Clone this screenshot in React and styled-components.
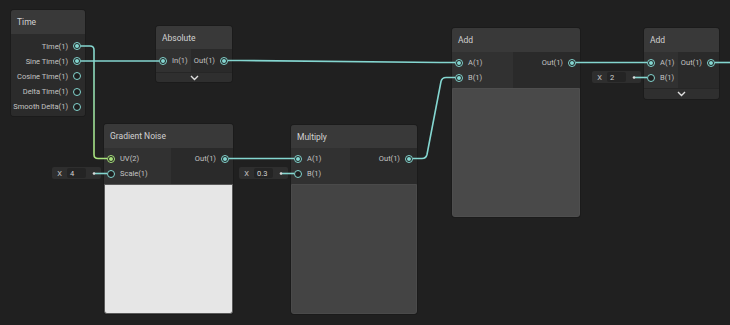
import React from 'react';
import styled, { createGlobalStyle } from 'styled-components';

const GlobalStyle = createGlobalStyle`
  html, body { margin: 0; padding: 0; background: #202020; }
  body { font-family: Roboto, "Noto Sans", sans-serif; }
`;

const CYAN = '#84d6d0';
const GREEN = '#a8e27c';

const Canvas = styled.div`
  position: relative;
  width: 730px;
  height: 325px;
  overflow: hidden;
  background: #202020;
`;

const WireLayer = styled.svg`
  position: absolute;
  left: 0;
  top: 0;
  width: 730px;
  height: 325px;
  pointer-events: none;
`;

const Node = styled.div`
  position: absolute;
  left: ${p => p.$x}px;
  top: ${p => p.$y}px;
  width: ${p => p.$w}px;
  border-radius: 3px;
  background: #2c2c2c;
  box-shadow: 0 0 0 1px #1b1b1b;
  display: flex;
  flex-direction: column;
`;

const Header = styled.div`
  height: ${p => p.$h}px;
  display: flex;
  align-items: center;
  padding-left: 6px;
  background: #393939;
  border-radius: 3px 3px 0 0;
  color: #d2d2d2;
  font-size: 8.5px;
`;

const Ports = styled.div`
  display: flex;
  height: ${p => p.$h}px;
`;

const InCol = styled.div`
  width: ${p => p.$w}px;
  background: #313131;
  display: flex;
  flex-direction: column;
  justify-content: center;
`;

const OutCol = styled.div`
  flex: 1;
  background: #2a2a2a;
  display: flex;
  flex-direction: column;
  justify-content: ${p => (p.$top ? 'flex-start' : 'center')};
  padding-top: ${p => (p.$top ? 3 : 0)}px;
`;

const Row = styled.div`
  position: relative;
  height: ${p => p.$h || 15}px;
  display: flex;
  align-items: center;
  justify-content: ${p => (p.$out ? 'flex-end' : 'flex-start')};
  gap: 5px;
  padding: ${p => (p.$out ? '0 4px 0 0' : '0 0 0 3px')};
  color: #c4c4c4;
  font-size: 7.5px;
  white-space: nowrap;
`;

const Port = styled.span`
  position: relative;
  width: 6px;
  height: 6px;
  border-radius: 50%;
  border: 1px solid ${p => p.$c || CYAN};
  background: #1e1e1e;
  flex: none;
  &::after {
    content: '';
    display: ${p => (p.$on ? 'block' : 'none')};
    position: absolute;
    left: 1px;
    top: 1px;
    width: 4px;
    height: 4px;
    border-radius: 50%;
    background: ${p => p.$c || CYAN};
  }
`;

const TimeBody = styled.div`
  padding: 4.5px 0 2px;
  background: #2b2b2b;
  border-radius: 0 0 3px 3px;
`;

const Chevron = styled.div`
  height: ${p => p.$h}px;
  display: flex;
  align-items: center;
  justify-content: center;
  background: #2f2f2f;
  border-top: 1px solid #262626;
  border-radius: 0 0 3px 3px;
`;

const Preview = styled.div`
  height: ${p => p.$h}px;
  background: ${p => p.$bg};
  border: 1px solid ${p => p.$edge};
  border-radius: 0 0 3px 3px;
`;

const Field = styled.div`
  position: absolute;
  right: calc(100% + 3px);
  top: 1px;
  width: 49px;
  height: 12px;
  display: flex;
  align-items: center;
  background: #2e2e2e;
  border-radius: 2px;
  color: #c4c4c4;
  font-size: 7.5px;
`;

const FieldLabel = styled.span`
  width: 15px;
  text-align: center;
`;

const FieldInput = styled.span`
  width: 16px;
  height: 10px;
  display: flex;
  align-items: center;
  padding-left: 3px;
  background: #242424;
  border-radius: 2px;
  color: #d4d4d4;
`;

const ChevronIcon = () => (
  <svg width="9" height="6" viewBox="0 0 9 6">
    <polyline points="1,1 4.5,4.5 8,1" fill="none" stroke="#e0e0e0" strokeWidth="1.4" />
  </svg>
);

const InField = ({ value }) => (
  <Field>
    <FieldLabel>X</FieldLabel>
    <FieldInput>{value}</FieldInput>
  </Field>
);

const Wires = () => (
  <WireLayer>
    <defs>
      <linearGradient id="tg" gradientUnits="userSpaceOnUse" x1="0" y1="46" x2="0" y2="158">
        <stop offset="0" stopColor={CYAN} />
        <stop offset="1" stopColor={GREEN} />
      </linearGradient>
    </defs>
    <g fill="none" strokeWidth="1.6" stroke={CYAN}>
      <path d="M81 46 H90 Q94 46 94 50 V154.5 Q94 158.5 98 158.5 H107" stroke="url(#tg)" />
      <path d="M81 61 H159" />
      <path d="M228 60.5 H240 L440 62.5 H455" />
      <path d="M229 158.5 H294" />
      <path d="M413 158.5 H422 Q426 158.5 427 154.5 L441 81.5 Q442 77.5 446 77.5 H455" />
      <path d="M576 62.5 H647" />
      <path d="M715 62.5 H730" />
      <path d="M94 173.5 H107" />
      <path d="M281 173.5 H294" />
      <path d="M634 77.5 H647" />
    </g>
    <g fill="#d8d8d8">
      <circle cx="94" cy="173.5" r="1.3" />
      <circle cx="281" cy="173.5" r="1.3" />
      <circle cx="634" cy="77.5" r="1.3" />
    </g>
  </WireLayer>
);

const TimeNode = () => (
  <Node $x={11} $y={10} $w={74}>
    <Header $h={24}>Time</Header>
    <TimeBody>
      {['Time(1)', 'Sine Time(1)', 'Cosine Time(1)', 'Delta Time(1)', 'Smooth Delta(1)'].map((l, i) => (
        <Row $out $h={15.2} key={l}>
          {l}
          <Port $on={i < 2} />
        </Row>
      ))}
    </TimeBody>
  </Node>
);

const MathNode = ({ x, y, w, title, head, inW, inputs, chevron, preview }) => (
  <Node $x={x} $y={y} $w={w}>
    <Header $h={head}>{title}</Header>
    <Ports $h={inputs.length > 1 ? 36 : 23}>
      <InCol $w={inW}>
        {inputs.map(inp => (
          <Row key={inp.label}>
            {inp.field && <InField value={inp.field} />}
            <Port $on={inp.on} $c={inp.color} />
            {inp.label}
          </Row>
        ))}
      </InCol>
      <OutCol $top={inputs.length > 1}>
        <Row $out>
          Out(1)
          <Port $on />
        </Row>
      </OutCol>
    </Ports>
    {chevron && (
      <Chevron $h={chevron}>
        <ChevronIcon />
      </Chevron>
    )}
    {preview && <Preview $h={preview.h} $bg={preview.bg} $edge={preview.edge} />}
  </Node>
);

export default function App() {
  return (
    <Canvas>
      <GlobalStyle />
      <TimeNode />
      <MathNode x={156} y={26} w={76} title="Absolute" head={23} inW={35}
        inputs={[{ label: 'In(1)', on: true }]} chevron={9} />
      <MathNode x={104} y={124} w={129} title="Gradient Noise" head={24} inW={67}
        inputs={[{ label: 'UV(2)', on: true, color: GREEN }, { label: 'Scale(1)', field: '4' }]}
        preview={{ h: 128, bg: '#e6e6e6', edge: '#5a5a5a' }} />
      <MathNode x={291} y={125} w={126} title="Multiply" head={23} inW={59}
        inputs={[{ label: 'A(1)', on: true }, { label: 'B(1)', field: '0.3' }]}
        preview={{ h: 128, bg: '#444444', edge: '#4a4a4a' }} />
      <MathNode x={452} y={28} w={128} title="Add" head={24} inW={61}
        inputs={[{ label: 'A(1)', on: true }, { label: 'B(1)', on: true }]}
        preview={{ h: 127, bg: '#494949', edge: '#4e4e4e' }} />
      <MathNode x={644} y={28} w={75} title="Add" head={24} inW={34}
        inputs={[{ label: 'A(1)', on: true }, { label: 'B(1)', field: '2' }]} chevron={10} />
      <Wires />
    </Canvas>
  );
}
